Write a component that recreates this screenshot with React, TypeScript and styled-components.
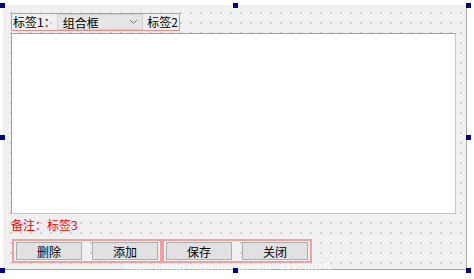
import React from "react";
import styled, { createGlobalStyle } from "styled-components";

const Global = createGlobalStyle`
  html, body { margin: 0; padding: 0; background: #ffffff; }
  body { font-family: "Noto Sans CJK SC", "Liberation Sans", sans-serif; }
`;

const Canvas = styled.div`
  position: relative;
  width: 474px;
  height: 279px;
  overflow: hidden;
`;

// designer form with dot grid
const Form = styled.div`
  position: relative;
  margin: 5px 0 0 3px;
  width: 464px;
  height: 265px;
  box-sizing: border-box;
  background-color: #f0f0f0;
  background-image: radial-gradient(circle, #bcbcbc 0.6px, transparent 0.9px);
  background-size: 10px 10px;
  background-position: 3px 3px;
  border-right: 1px solid #a8a8a8;
  border-bottom: 1px solid #a8a8a8;
  padding: 8px 11px 0 8px;
  display: flex;
  flex-direction: column;
`;

const Handle = styled.div<{ $x: number; $y: number }>`
  position: absolute;
  left: ${(p) => p.$x}px;
  top: ${(p) => p.$y}px;
  width: 5px;
  height: 5px;
  background: #000080;
`;

const LayoutBox = styled.div`
  display: flex;
  align-items: center;
  border: 1px solid #ec8a8a;
  box-sizing: border-box;
`;

const TopRow = styled(LayoutBox)`
  width: 169px;
  height: 18px;
  padding: 0 1px 0 1px;
`;

const Label = styled.span<{ $color?: string }>`
  font-size: 12px;
  line-height: 16px;
  color: ${(p) => p.$color || "#000000"};
  white-space: nowrap;
`;

const Combo = styled.div`
  display: flex;
  align-items: center;
  justify-content: space-between;
  box-sizing: border-box;
  width: 94px;
  height: 16px;
  margin-left: 1px;
  margin-right: 4px;
  padding: 0 4px 0 5px;
  background: #e5e5e5;
  border: 1px solid #cfcfcf;
  font-size: 12px;
  color: #000;
`;

const TextEdit = styled.div`
  margin-top: 2px;
  width: 445px;
  height: 181px;
  box-sizing: border-box;
  background: #ffffff;
  border: 1px solid #a0a0a0;
  border-right-color: #c8c8c8;
  border-bottom-color: #c8c8c8;
`;

const Note = styled(Label)`
  margin-top: 3px;
`;

const ButtonRow = styled.div`
  display: flex;
  margin-top: 6px;
  margin-left: 1px;
`;

const Group = styled(LayoutBox)`
  height: 24px;
  padding: 0 2px;
  gap: 10px;
  border-width: 2px;
  border-color: #f0a0a0;
`;

const Button = styled.div`
  width: 66px;
  height: 18px;
  box-sizing: border-box;
  background: #e1e1e1;
  border: 1px solid #adadad;
  display: flex;
  align-items: center;
  justify-content: center;
  font-size: 12px;
  color: #000;
`;

const Watermark = styled.div`
  position: absolute;
  left: 122px;
  bottom: -4px;
  font-family: "Liberation Sans", sans-serif;
  font-size: 11px;
  line-height: 12px;
  color: rgba(255, 255, 255, 0.8);
  letter-spacing: 0.5px;
`;

const handles = [
  [0, 3], [233, 3], [466, 3],
  [0, 135], [466, 135],
  [0, 268], [233, 268], [466, 268],
];

export default function App() {
  return (
    <Canvas>
      <Global />
      <Form>
        <TopRow>
          <Label>标签1：</Label>
          <Combo>
            <span>组合框</span>
            <svg width="9" height="6" viewBox="0 0 9 6">
              <path d="M1 1 L4.5 4.5 L8 1" fill="none" stroke="#777" strokeWidth="1" />
            </svg>
          </Combo>
          <Label>标签2</Label>
        </TopRow>
        <TextEdit />
        <Note $color="#ff0000">备注：标签3</Note>
        <ButtonRow>
          <Group>
            <Button>删除</Button>
            <Button>添加</Button>
          </Group>
          <Group>
            <Button>保存</Button>
            <Button>关闭</Button>
          </Group>
        </ButtonRow>
        <Watermark>https://blog.csdn.net/weixin_44120025</Watermark>
      </Form>
      {handles.map(([x, y], i) => (
        <Handle key={i} $x={x} $y={y} />
      ))}
    </Canvas>
  );
}
